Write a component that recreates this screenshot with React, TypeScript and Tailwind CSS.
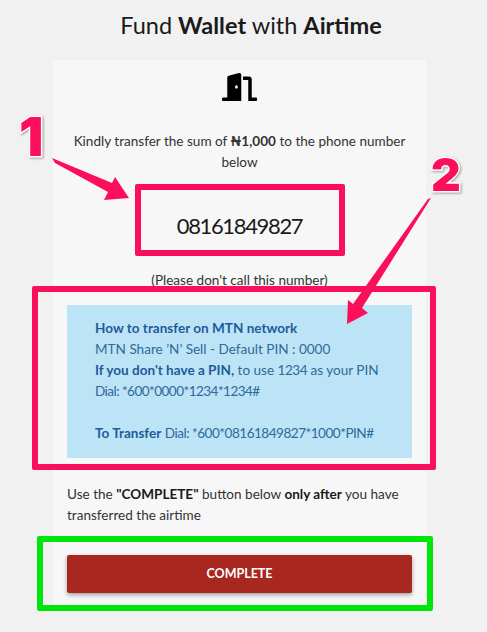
import React from 'react';
import { FaDoorOpen } from 'react-icons/fa';

const App = () => {
  return (
    <div className="relative h-[632px] w-[487px] overflow-hidden bg-[#f1f1f1] font-['Lato',sans-serif] text-[13.55px] leading-[21px] text-[#333]">
      {/* Title */}
      <h1 className="flex h-[60px] items-center justify-center pb-[10px] pl-[15px] text-[23.5px] text-[#1a1a1a]">
        <span>
          Fund <b>Wallet</b> with <b>Airtime</b>
        </span>
      </h1>

      {/* Card */}
      <div className="ml-[53px] flex h-[545px] w-[373px] flex-col bg-[#f7f7f7] px-[14px] pt-[13px] text-center">
        <div className="flex justify-center">
          <FaDoorOpen className="h-[28px] w-[35px] text-black" />
        </div>
        <p className="mt-[30px]">
          Kindly transfer the sum of <b>₦1,000</b> to the phone number below
        </p>
        <p className="mt-[37px] text-[22px] leading-[32px] tracking-[-1.35px] text-[#1a1a1a]">08161849827</p>
        <p className="mt-[28px]">(Please don't call this number)</p>

        {/* Instructions */}
        <div className="mt-[14px] h-[153px] bg-[#bde3f7] py-[13px] pl-[28px] text-left text-[#2f6a99]">
          <p className="font-bold text-[#1e5c99]">How to transfer on MTN network</p>
          <p>MTN Share ’N’ Sell - Default PIN : 0000</p>
          <p>
            <b className="text-[#1e5c99]">If you don't have a PIN,</b> to use <span className="tracking-[-0.5px]">1234</span> as your PIN
          </p>
          <p className="tracking-[-0.55px]">Dial: *600*0000*1234*1234#</p>
          <p className="mt-[21px]">
            <b className="text-[#1e5c99]">To Transfer</b> <span className="tracking-[-0.5px]">Dial: *600*08161849827*1000*PIN#</span>
          </p>
        </div>

        <p className="mt-[26px] text-left">
          Use the <b className="text-[#1a1a1a]">"COMPLETE"</b> button below <b className="text-[#1a1a1a]">only after</b> you have transferred the airtime
        </p>
        <button className="mt-[29px] h-[38px] rounded-[2px] bg-[#a82820] pb-[1px] text-[12.5px] font-bold text-white shadow-[0_2px_4px_rgba(0,0,0,0.35)]">
          COMPLETE
        </button>
      </div>

      {/* Annotations drawn over the screenshot */}
      <div className="absolute left-[135px] top-[184px] h-[72px] w-[210px] rounded-[2px] border-[6px] border-[#fb0f5a]" />
      <div className="absolute left-[32px] top-[286px] h-[184px] w-[404px] rounded-[2px] border-[6px] border-[#fb0f5a]" />
      <div className="absolute left-[37px] top-[536px] h-[75px] w-[396px] rounded-[2px] border-[6px] border-[#00e60a]" />

      <span className="absolute left-[19px] top-[107px] font-['Inter',sans-serif] text-[54px] font-black leading-[60px] text-[#fb0f5a] [paint-order:stroke_fill] [-webkit-text-stroke:3px_white] [filter:drop-shadow(1px_1px_1px_rgba(0,0,0,0.35))]">
        1
      </span>
      <span className="absolute left-[431px] top-[144px] font-['Inter',sans-serif] text-[46px] font-black leading-[60px] text-[#fb0f5a] [paint-order:stroke_fill] [-webkit-text-stroke:3px_white] [filter:drop-shadow(1px_1px_1px_rgba(0,0,0,0.35))]">
        2
      </span>

      <svg className="pointer-events-none absolute inset-0" width="487" height="632" viewBox="0 0 487 632">
        <polygon points="52,158 112,183 115,177 129,198 104,200 108,192 55,163" fill="#fb0f5a" />
        <polygon points="431,198 362,308 368,313 347,324 348,300 353,304 428,199" fill="#fb0f5a" />
      </svg>
    </div>
  );
};

export default App;
